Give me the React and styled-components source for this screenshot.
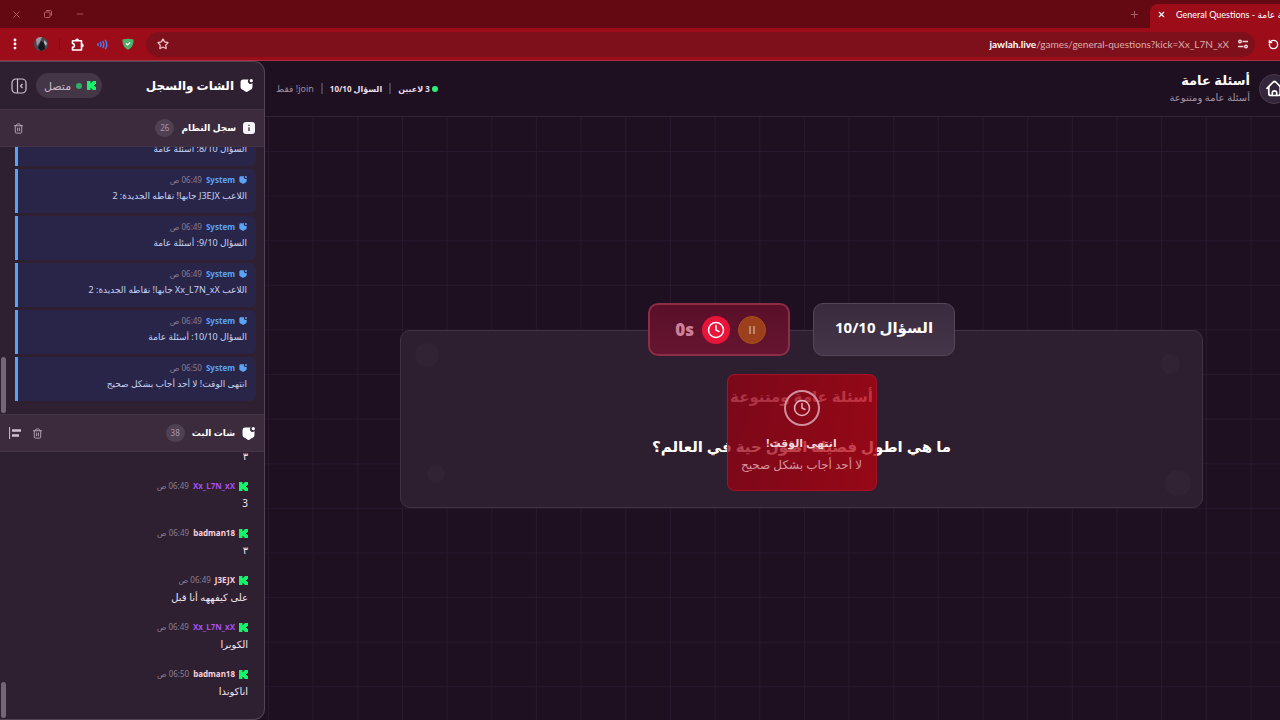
import React from 'react';
import styled, { createGlobalStyle } from 'styled-components';
import { X, Minus, Plus, Star, RotateCcw, Trash2, Clock, EllipsisVertical } from 'lucide-react';

const systemLogs = [
  { time: '06:49 ص', text: 'السؤال 8/10: أسئلة عامة' },
  { time: '06:49 ص', text: 'اللاعب J3EJX جابها! نقاطه الجديدة: 2' },
  { time: '06:49 ص', text: 'السؤال 9/10: أسئلة عامة' },
  { time: '06:49 ص', text: 'اللاعب Xx_L7N_xX جابها! نقاطه الجديدة: 2' },
  { time: '06:49 ص', text: 'السؤال 10/10: أسئلة عامة' },
  { time: '06:50 ص', text: 'انتهى الوقت! لا أحد أجاب بشكل صحيح' },
];

const chats = [
  { name: 'badman18', color: '#fcd0dc', time: '06:49 ص', text: '٣' },
  { name: 'Xx_L7N_xX', color: '#a94fe6', time: '06:49 ص', text: '3' },
  { name: 'badman18', color: '#fcd0dc', time: '06:49 ص', text: '٣' },
  { name: 'J3EJX', color: '#fcd0dc', time: '06:49 ص', text: 'على كيفههه أنا قبل' },
  { name: 'Xx_L7N_xX', color: '#a94fe6', time: '06:49 ص', text: 'الكوبرا' },
  { name: 'badman18', color: '#fcd0dc', time: '06:50 ص', text: 'اناكوندا' },
];

const KickIcon = ({ size = 9 }) => (
  <svg width={size} height={size} viewBox="0 0 9 9" fill="#16f26a" aria-hidden="true">
    <path d="M0 0h3.500v2h1V1h1V0H9v3H8v1H7v1h1v1h1v3H5.500V8h-1V7h-1v2H0z" />
  </svg>
);

const ChatIcon = ({ size = 13 }) => (
  <svg width={size} height={size} viewBox="0 0 24 24" fill="currentColor" aria-hidden="true">
    <path d="M6 1h10a4.500 4.500 0 0 0 7 6.500v7c0 3.500-1.500 5.300-4.500 5.800L13.500 23.500c-1 .6-2 .6-3 0L6 20.300C2.500 19.500 1 18 1 14.500V6.500C1 3 2.500 1 6 1z" />
    <circle cx="20.800" cy="3.200" r="3" />
  </svg>
);

const InfoIcon = () => (
  <svg width="12" height="12" viewBox="0 0 12 12" aria-hidden="true">
    <rect width="12" height="12" rx="3" fill="#f8f3f8" />
    <path d="M6 5.300v3.700M6 2.800v1.200" stroke="#3b2b3d" strokeWidth="1.300" />
  </svg>
);

const PanelIcon = () => (
  <svg width="16" height="16" viewBox="0 0 16 16" fill="none" stroke="currentColor" strokeWidth="1.200" aria-hidden="true">
    <rect x="1" y="1" width="14" height="14" rx="4" />
    <path d="M6.500 1v14M11.500 6 9.500 8l2 2" />
  </svg>
);

const AlignIcon = () => (
  <svg width="12" height="12" viewBox="0 0 12 12" aria-hidden="true">
    <path d="M.6 0v12" stroke="currentColor" strokeWidth="1" />
    <path d="M3 3.500h9M3 8.500h7" stroke="currentColor" strokeWidth="2.600" />
  </svg>
);

const RestoreIcon = () => (
  <svg width="8" height="8" viewBox="0 0 8 8" fill="none" stroke="currentColor" aria-hidden="true">
    <rect x=".5" y="2" width="5.500" height="5.500" rx="1" />
    <path d="M2.200.5h4.300a1 1 0 0 1 1 1v4.300" />
  </svg>
);

const PuzzleIcon = () => (
  <svg width="13" height="13" viewBox="0 0 13 13" fill="none" stroke="currentColor" strokeWidth="1.600" strokeLinejoin="round" aria-hidden="true">
    <path d="M1.500 2.800h9v9.200h-9V9.400q2-.3 2-2t-2-2z" />
    <path d="M4.500 2.400a1.600 1.600 0 0 1 3.200 0zM10.900 5.800a1.600 1.600 0 0 1 0 3.200z" fill="currentColor" strokeWidth=".6" />
  </svg>
);

const HomeIcon = () => (
  <svg width="17" height="17" viewBox="0 0 17 17" fill="none" stroke="currentColor" strokeWidth="1.700" strokeLinecap="round" strokeLinejoin="round" aria-hidden="true">
    <path d="M1 8.300 7.300 2q1.200-1 2.400 0L16 8.300M2.800 7v6.500q0 2 2 2h7.400q2 0 2-2V7" />
    <path d="M6.300 15.300v-2.200a2.200 2.200 0 0 1 4.400 0v2.200" />
  </svg>
);

const WaveIcon = () => (
  <svg width="11" height="11" viewBox="0 0 11 11" fill="none" stroke="#4a7bea" strokeWidth="1.500" strokeLinecap="round" aria-hidden="true">
    <path d="M1 4.500v2M3.500 3.500q1 2 0 4M6 2.500q1.600 3 0 6M8.500 1.300q2.600 4.200 0 8.400" />
  </svg>
);

const ShieldIcon = () => (
  <svg width="12" height="12" viewBox="0 0 12 12" aria-hidden="true">
    <path d="M.5 1.500Q6-.2 11.500 1.500C11.800 6.500 10 10 6 11.800 2 10 .2 6.500.5 1.500z" fill="#4fb069" />
    <path d="m4 5.500 1.500 1.500L8.200 4.300" fill="none" stroke="#fff" strokeWidth="1.200" />
  </svg>
);

const TuneIcon = () => (
  <svg width="10" height="10" viewBox="0 0 10 10" fill="none" stroke="currentColor" strokeWidth="1.400" aria-hidden="true">
    <circle cx="2" cy="2.500" r="1.300" />
    <path d="M4.500 2.500H10M0 7.500h5.500" />
    <circle cx="8" cy="7.500" r="1.300" />
  </svg>
);

const Avatar = () => (
  <svg width="14" height="14" viewBox="0 0 14 14" aria-hidden="true">
    <circle cx="7" cy="7" r="7" fill="#4b4a52" />
    <path d="M2 2.200A7 7 0 0 1 8 .1L6 5 3 9z" fill="#9a989c" />
    <path d="M7 4l3 2 1 6-4 2-3-3z" fill="#17161c" />
    <path d="M10 3l3 3-1 3-2-3z" fill="#b3b4b8" />
  </svg>
);

const App = () => {
  return (
    <Page>
      <GlobalStyle />
      <TabStrip>
        <WindowButtons>
          <IconButton $color="#b3626a" aria-label="إغلاق"><X size={11} strokeWidth={2} /></IconButton>
          <IconButton $color="#b3626a" aria-label="استعادة"><RestoreIcon /></IconButton>
          <IconButton $color="#b3626a" aria-label="تصغير"><Minus size={10} strokeWidth={2} /></IconButton>
        </WindowButtons>
        <IconButton $color="#b3626a" aria-label="علامة تبويب جديدة"><Plus size={11} /></IconButton>
        <Tab>
          <IconButton $color="#fff" $w={12} aria-label="إغلاق علامة التبويب"><X size={9} strokeWidth={3} /></IconButton>
          <span>General Questions - أسئلة عامة</span>
        </Tab>
      </TabStrip>

      <Toolbar>
        <IconButton $color="#fff" $w={26} aria-label="القائمة"><EllipsisVertical size={14} strokeWidth={3} /></IconButton>
        <IconButton $w={26} aria-label="الحساب"><Avatar /></IconButton>
        <Divider />
        <IconButton $color="#fff" $w={25} aria-label="الإضافات"><PuzzleIcon /></IconButton>
        <IconButton $w={25} aria-label="الصوت"><WaveIcon /></IconButton>
        <IconButton $w={25} aria-label="الحماية"><ShieldIcon /></IconButton>
        <AddressBar>
          <IconButton $color="#f0c4c8" $w={16} aria-label="إشارة مرجعية"><Star size={12} strokeWidth={2.500} /></IconButton>
          <Address><b>jawlah.live</b>/games/general-questions?kick=Xx_L7N_xX</Address>
          <IconButton $color="#f6d4d8" $w={18} aria-label="معلومات الموقع"><TuneIcon /></IconButton>
        </AddressBar>
        <IconButton $color="#fff" $w={14} aria-label="إعادة التحميل"><RotateCcw size={11} strokeWidth={3} /></IconButton>
      </Toolbar>

      <Shell>
        <Sidebar>
          <SidebarHead>
            <ChatIcon />
            <h2>الشات والسجل</h2>
            <StatusPill>
              <KickIcon />
              <Dot $color="#2fae66" />
              متصل
            </StatusPill>
            <IconButton $color="#cfc0d2" $w={18} aria-label="طي اللوحة"><PanelIcon /></IconButton>
          </SidebarHead>

          <SectionHead>
            <InfoIcon />
            <h3>سجل النظام</h3>
            <Count>26</Count>
            <SectionTools $pad={3}>
              <IconButton $color="#b8a8bb" $w={12} aria-label="مسح السجل"><Trash2 size={11} /></IconButton>
            </SectionTools>
          </SectionHead>
          <Pane $bottom={13} $gap={3} $thumb={56}>
            {systemLogs.map((log, i) => (
              <LogItem key={i}>
                <Meta $color="#5ba3f5">
                  <ChatIcon size={8} />
                  <b>System</b>
                  <time>{log.time}</time>
                </Meta>
                <LogText>{log.text}</LogText>
              </LogItem>
            ))}
          </Pane>

          <SectionHead>
            <ChatIcon />
            <h3>شات البث</h3>
            <Count>38</Count>
            <SectionTools $pad={0}>
              <IconButton $color="#b8a8bb" $w={12} aria-label="مسح الشات"><Trash2 size={11} /></IconButton>
              <IconButton $color="#d0c2d3" $w={12} aria-label="محاذاة"><AlignIcon /></IconButton>
            </SectionTools>
          </SectionHead>
          <Pane $bottom={20} $gap={16} $thumb={36}>
            {chats.map((chat, i) => (
              <ChatItem key={i}>
                <Meta $color={chat.color}>
                  <KickIcon />
                  <b>{chat.name}</b>
                  <time>{chat.time}</time>
                </Meta>
                <ChatText>{chat.text}</ChatText>
              </ChatItem>
            ))}
          </Pane>
        </Sidebar>

        <Main>
          <MainHead>
            <HomeButton aria-label="الرئيسية"><HomeIcon /></HomeButton>
            <Titles>
              <h1>أسئلة عامة</h1>
              <p>أسئلة عامة ومتنوعة</p>
            </Titles>
            <Info>
              <Players>
                <Dot $color="#2af07c" />
                <strong>3 لاعبين</strong>
              </Players>
              <Bar />
              <strong>السؤال 10/10</strong>
              <Bar />
              <span>join! فقط</span>
            </Info>
          </MainHead>

          <Stage>
            <Badges>
              <QuestionBadge>السؤال 10/10</QuestionBadge>
              <TimerBadge>
                <RoundButton aria-label="إيقاف مؤقت">
                  <svg width="8" height="8" viewBox="0 0 8 8" aria-hidden="true">
                    <path d="M2 0v8M6 0v8" stroke="#c99a80" strokeWidth="1.600" />
                  </svg>
                </RoundButton>
                <ClockDisc><Clock size={18} /></ClockDisc>
                <b>0s</b>
              </TimerBadge>
            </Badges>
            <Card>
              <Blob $size={24} $top={12} $left={14} />
              <Blob $size={18} $bottom={24} $left={26} />
              <Blob $size={20} $top={23} $right={22} />
              <Blob $size={26} $bottom={11} $right={11} />
              <Category>أسئلة عامة ومتنوعة</Category>
              <Question>ما هي اطول فصيلة اطول حية في العالم؟</Question>
              <TimeUp role="alert">
                <Ring><Clock size={18} /></Ring>
                <strong>انتهى الوقت!</strong>
                <span>لا أحد أجاب بشكل صحيح</span>
              </TimeUp>
            </Card>
          </Stage>
        </Main>
      </Shell>
    </Page>
  );
};

const GlobalStyle = createGlobalStyle`
  * {
    box-sizing: border-box;
  }

  body {
    margin: 0;
    background-color: #1e1021;
    font-family: 'Noto Sans', 'DejaVu Sans', sans-serif;
  }

  h1, h2, h3, p {
    margin: 0;
  }

  svg {
    display: block;
    flex-shrink: 0;
  }
`;

const Page = styled.div`
  display: flex;
  flex-direction: column;
  height: 100vh;
  overflow: hidden;
  color: #fff;
`;

const IconButton = styled.button`
  display: flex;
  flex-shrink: 0;
  align-items: center;
  justify-content: center;
  width: ${(props) => props.$w || 32}px;
  padding: 0;
  border: none;
  background: none;
  color: ${(props) => props.$color};
`;

const TabStrip = styled.div`
  display: flex;
  flex-shrink: 0;
  align-items: stretch;
  height: 28px;
  background-color: #640812;
`;

const WindowButtons = styled.div`
  display: flex;
  margin-right: auto;
`;

const Tab = styled.div`
  display: flex;
  align-items: center;
  gap: 9px;
  width: 130px;
  margin-top: 4px;
  padding-left: 5px;
  padding-bottom: 4px;
  border-radius: 8px 0 0 0;
  background-color: #9c0d19;
  font-family: Lato, 'DejaVu Sans', sans-serif;
  font-size: 9px;
  white-space: nowrap;
  overflow: hidden;
`;

const Toolbar = styled.div`
  display: flex;
  flex-shrink: 0;
  align-items: center;
  height: 33px;
  padding-left: 2px;
  border-bottom: 1px solid #a5323f;
  background-color: #9c0d19;
`;

const Divider = styled.span`
  width: 1px;
  height: 12px;
  margin: 0 5px;
  background-color: #74101a;
`;

const AddressBar = styled.div`
  display: flex;
  flex: 1;
  align-items: center;
  height: 25px;
  margin-left: 6px;
  margin-right: 11px;
  padding: 0 3px 0 9px;
  border-radius: 13px;
  background-color: #7e101b;
`;

const Address = styled.div`
  margin-left: auto;
  margin-right: 5px;
  color: #dbabb0;
  font-family: Lato, sans-serif;
  font-size: 10px;

  b {
    color: #fff;
  }
`;

const Shell = styled.div`
  display: flex;
  flex: 1;
  min-height: 0;
`;

const Sidebar = styled.aside`
  display: flex;
  flex-shrink: 0;
  flex-direction: column;
  width: 265px;
  direction: rtl;
  border: 1px solid #534355;
  border-left: none;
  border-radius: 0 11px 11px 0;
  background-color: #2e2030;
  overflow: hidden;
`;

const SidebarHead = styled.div`
  display: flex;
  flex-shrink: 0;
  align-items: center;
  gap: 6px;
  height: 47px;
  padding: 0 11px 0 10px;

  h2 {
    margin-left: auto;
    font-size: 12px;
    line-height: 18px;
  }
`;

const StatusPill = styled.div`
  display: flex;
  align-items: center;
  gap: 5px;
  height: 25px;
  margin-left: 2px;
  padding: 0 6px 0 8px;
  border-radius: 13px;
  background-color: #453647;
  color: #c9bccb;
  font-size: 11px;
`;

const Dot = styled.span`
  flex-shrink: 0;
  width: 6px;
  height: 6px;
  border-radius: 50%;
  background-color: ${(props) => props.$color};
`;

const SectionHead = styled.div`
  display: flex;
  flex-shrink: 0;
  align-items: center;
  gap: 7px;
  height: 38px;
  padding: 0 9px;
  border-top: 1px solid #443546;
  border-bottom: 1px solid #443546;
  background-color: #3b2b3d;

  h3 {
    font-size: 9px;
    line-height: 18px;
  }
`;

const Count = styled.span`
  padding: 0 5px;
  border-radius: 9px;
  background-color: #4f4052;
  color: #a897ab;
  font-size: 8px;
  line-height: 18px;
`;

const SectionTools = styled.div`
  display: flex;
  gap: 10px;
  margin-right: auto;
  padding-left: ${(props) => props.$pad}px;
`;

const Pane = styled.div`
  position: relative;
  display: flex;
  flex: 1 1 100px;
  flex-direction: column;
  justify-content: flex-end;
  gap: ${(props) => props.$gap}px;
  min-height: 0;
  padding: 0 8px ${(props) => props.$bottom}px 15px;
  overflow: hidden;

  &::after {
    content: '';
    position: absolute;
    left: 1px;
    bottom: 1px;
    width: 5px;
    height: ${(props) => props.$thumb}px;
    border-radius: 3px;
    background-color: #756577;
  }
`;

const LogItem = styled.div`
  flex-shrink: 0;
  padding: 5px 9px 9px;
  border-left: 3px solid #5ba3f5;
  border-radius: 0 6px 6px 0;
  background-color: #292549;
`;

const ChatItem = styled.div`
  flex-shrink: 0;
  padding: 0 8px;
`;

const Meta = styled.div`
  display: flex;
  align-items: center;
  gap: 4px;
  color: ${(props) => props.$color};
  font-size: 8px;
  line-height: 12px;

  time {
    color: #8c7e92;
  }
`;

const LogText = styled.p`
  margin-top: 2px;
  color: #c3d3f5;
  font-size: 9px;
  line-height: 16px;
  white-space: nowrap;
`;

const ChatText = styled.p`
  margin-top: 3px;
  color: #f1e6f2;
  font-size: 10px;
  line-height: 16px;
`;

const Main = styled.main`
  display: flex;
  flex: 1;
  flex-direction: column;
  min-width: 0;
  direction: rtl;
`;

const MainHead = styled.header`
  display: flex;
  flex-shrink: 0;
  align-items: center;
  gap: 9px;
  height: 56px;
  margin-right: -9px;
  padding-left: 11px;
  border-bottom: 1px solid #322535;
`;

const HomeButton = styled.button`
  display: flex;
  align-items: center;
  justify-content: center;
  width: 30px;
  height: 30px;
  padding: 0;
  border: 1px solid #4b3d4e;
  border-radius: 50%;
  background-color: #33253a;
  color: #fff;
`;

const Titles = styled.div`
  padding-bottom: 2px;

  h1 {
    font-size: 13px;
    line-height: 18px;
  }

  p {
    color: #a294a6;
    font-size: 10px;
    line-height: 16px;
  }
`;

const Info = styled.div`
  display: flex;
  align-items: center;
  gap: 7px;
  margin-right: auto;
  color: #eadfec;
  font-size: 9px;

  strong {
    font-size: 8px;
    line-height: 16px;
  }

  span {
    color: #9a8c9e;
  }
`;

const Players = styled.div`
  display: flex;
  align-items: center;
  gap: 2px;
`;

const Bar = styled.i`
  width: 2px;
  height: 11px;
  background-color: #4b3d4e;
`;

const Stage = styled.section`
  display: flex;
  flex: 1;
  flex-direction: column;
  justify-content: center;
  padding: 0 77px 26px 135px;
  background-image: linear-gradient(to right, #2a182e 1px, transparent 1px),
    linear-gradient(to bottom, #2a182e 1px, transparent 1px);
  background-position: 3px 34px;
  background-size: 4.4% 7.4%;
`;

const Badges = styled.div`
  z-index: 1;
  display: flex;
  justify-content: center;
  gap: 23px;
  margin-bottom: -26px;
`;

const Badge = styled.div`
  display: flex;
  align-items: center;
  justify-content: center;
  min-width: 142px;
  height: 53px;
  border-radius: 10px;
  font-weight: bold;
`;

const QuestionBadge = styled(Badge)`
  padding-bottom: 6px;
  border: 1px solid #56465a;
  background: linear-gradient(#3a2b3e, #453549);
  font-size: 15px;
`;

const TimerBadge = styled(Badge)`
  gap: 8px;
  border: 2px solid #8f2c48;
  background: linear-gradient(#5a0f28, #661530);

  b {
    width: 22px;
    color: #cf7f98;
    font-size: 17px;
    white-space: nowrap;
  }
`;

const RoundButton = styled.button`
  display: flex;
  align-items: center;
  justify-content: center;
  width: 28px;
  height: 28px;
  padding: 0;
  border: 1px solid #a85218;
  border-radius: 50%;
  background-color: #9c3f1c;
`;

const ClockDisc = styled.span`
  display: flex;
  align-items: center;
  justify-content: center;
  width: 28px;
  height: 28px;
  border-radius: 50%;
  background-color: #e8143a;
`;

const Card = styled.div`
  position: relative;
  padding: 53px 20px 47px;
  border: 1px solid #413243;
  border-radius: 10px;
  background-color: #2d1f30;
  text-align: center;
`;

const Blob = styled.span`
  position: absolute;
  top: ${(props) => (props.$top ? `${props.$top}px` : 'auto')};
  bottom: ${(props) => (props.$bottom ? `${props.$bottom}px` : 'auto')};
  left: ${(props) => (props.$left ? `${props.$left}px` : 'auto')};
  right: ${(props) => (props.$right ? `${props.$right}px` : 'auto')};
  width: ${(props) => props.$size}px;
  height: ${(props) => props.$size}px;
  border-radius: 50%;
  background-color: #312234;
`;

const Category = styled.p`
  color: #e0c8d4;
  font-size: 15px;
  font-weight: bold;
  line-height: 24px;
`;

const Question = styled.p`
  margin-top: 24px;
  font-size: 15px;
  font-weight: bold;
  line-height: 28px;
`;

const TimeUp = styled.div`
  position: absolute;
  top: 43px;
  left: 50%;
  display: flex;
  flex-direction: column;
  align-items: center;
  width: 150px;
  height: 117px;
  padding-top: 15px;
  transform: translateX(-50%);
  border: 1px solid rgba(190, 20, 50, 0.6);
  border-radius: 8px;
  background: linear-gradient(100deg, rgba(150, 0, 18, 0.74), rgba(188, 0, 14, 0.74));
  white-space: nowrap;

  strong {
    margin-top: 6px;
    color: #f0d6dc;
    font-size: 11px;
    line-height: 22px;
  }

  span {
    color: #d593a0;
    font-size: 12px;
    line-height: 22px;
  }
`;

const Ring = styled.div`
  display: flex;
  align-items: center;
  justify-content: center;
  width: 36px;
  height: 36px;
  border: 2px solid #cf8f9b;
  border-radius: 50%;
  color: #e3b3bc;
`;

export default App;
